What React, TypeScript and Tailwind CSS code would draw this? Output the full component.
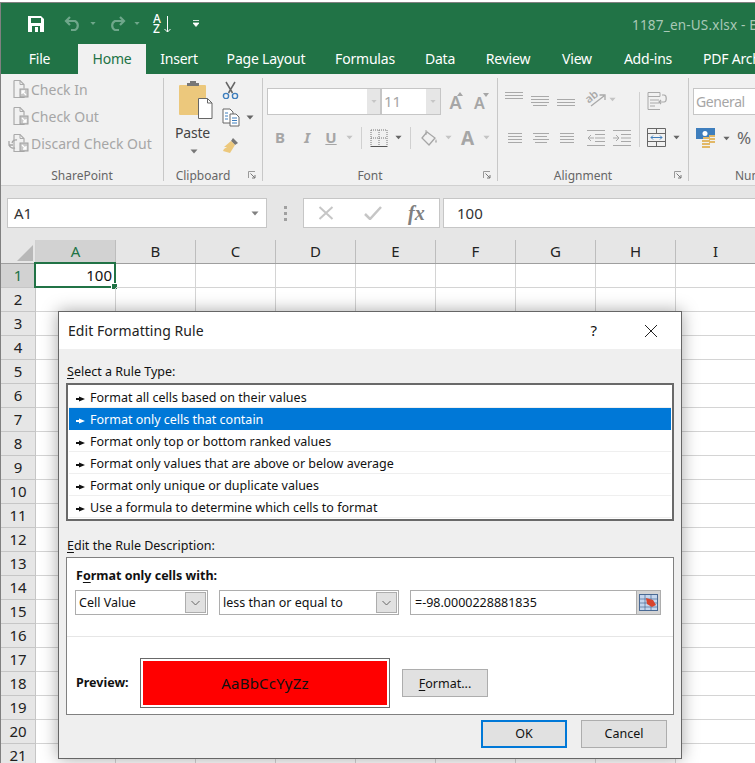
import React from "react";

const font = "font-['Noto_Sans',sans-serif]";

function Caret({ color = "#a6a6a6", className = "" }: { color?: string; className?: string }) {
  return (
    <svg width="8" height="5" viewBox="0 0 8 5" className={className}>
      <path d="M0.5 0.5H7.5L4 4.5Z" fill={color} />
    </svg>
  );
}

function PageBadge({ kind }: { kind: "in" | "out" | "discard" }) {
  return (
    <svg width="22" height="20" viewBox="0 0 22 20">
      {kind === "discard" && <path d="M5 10a4 4 0 0 1 5-3M2 8v4h4M2 12a5 5 0 0 0 6 3" fill="none" stroke="#a8a8a8" strokeWidth="1.3" />}
      <path d="M7 1.5h6l4 4v4M17 15v3.5H7V1.5" fill="none" stroke="#ababab" strokeWidth="1.2" />
      <path d="M13 1.5v4h4" fill="none" stroke="#ababab" />
      <rect x="13" y="10" width="8" height="8" fill="#c8c8c8" stroke="#a0a0a0" />
      <path d={kind === "in" ? "M19 16l-4-4m0 3v-3h3" : "M15 12l4 4m0-3v3h-3"} fill="none" stroke="#fff" strokeWidth="1.3" />
    </svg>
  );
}

function Lines({ w = 18, rows }: { w?: number; rows: [number, number][] }) {
  const h = Math.max(...rows.map(r => r[0])) + 1;
  return (
    <svg width={w} height={h} viewBox={`0 0 ${w} ${h}`}>
      {rows.map(([y, x], i) => (
        <path key={i} d={`M${x} ${y + 0.5}H${w - x}`} stroke="#a9a9a9" strokeWidth="1" />
      ))}
    </svg>
  );
}

function GroupLabel({ text, launcher = false }: { text: string; launcher?: boolean }) {
  return (
    <div className={`relative mt-auto h-[12px] pt-[2px] flex items-center justify-center text-[12px] text-[#666666] ${launcher ? "pr-[20px]" : ""}`}>
      <span className="whitespace-nowrap">{text}</span>
      {launcher && (
        <svg width="8" height="8" viewBox="0 0 8 8" className="absolute right-[6px] top-[2px]">
          <path d="M0.5 7V0.5H7" fill="none" stroke="#9a9a9a" />
          <path d="M2.5 2.5L7 7M4 7h3V4" fill="none" stroke="#777" />
        </svg>
      )}
    </div>
  );
}

function SharePointGroup() {
  const items: [("in" | "out" | "discard"), string][] = [
    ["in", "Check In"],
    ["out", "Check Out"],
    ["discard", "Discard Check Out"],
  ];
  return (
    <div className="w-[163px] shrink-0 flex flex-col border-r border-[#c8c8c8] my-[4px]">
      <div className="flex flex-col pl-[6px] pt-[1px] gap-[7px] h-[82px]">
        {items.map(([k, t]) => (
          <div key={t} className="flex items-center h-[20px] text-[14px] text-[#a6a6a6] gap-[2px]">
            <PageBadge kind={k} />
            <span className="whitespace-nowrap">{t}</span>
          </div>
        ))}
      </div>
      <GroupLabel text="SharePoint" />
    </div>
  );
}

function ClipboardGroup() {
  return (
    <div className="w-[99px] shrink-0 flex flex-col border-r border-[#c8c8c8] my-[4px]">
      <div className="flex h-[82px]">
        <div className="w-[56px] flex flex-col items-center pt-[2px] pl-[1px]">
          <svg width="36" height="40" viewBox="0 0 36 40" className="ml-[7px]">
            <rect x="1" y="5" width="27" height="30" fill="#ecc87c" rx="1" />
            <path d="M9 6V3h3V1h6v2h3v3Z" fill="#777" />
            <path d="M20.5 18.5h9l4.5 4.5v15.5h-13.500Z" fill="#fff" stroke="#666" />
            <path d="M29.500 18.500v4.500h4.500" fill="none" stroke="#666" />
          </svg>
          <span className="text-[14px] tracking-[-0.2px] leading-[18px] text-[#444] mt-[4px]">Paste</span>
          <Caret color="#777" className="mt-[7px] ml-[2px]" />
        </div>
        <div className="flex flex-col pt-[3px] pl-[2px] gap-[9px]">
          <svg width="17" height="18" viewBox="0 0 17 18">
            <path d="M4 1l6.500 11M13 1L6.500 12" stroke="#666" strokeWidth="1.500" fill="none" />
            <circle cx="4" cy="15" r="2.600" fill="none" stroke="#3e7ebd" strokeWidth="1.400" />
            <circle cx="13" cy="15" r="2.600" fill="none" stroke="#3e7ebd" strokeWidth="1.400" />
          </svg>
          <div className="flex items-center gap-[5px]">
            <svg width="19" height="19" viewBox="0 0 19 19">
              <path d="M1 1h7l3 3v11H1Z" fill="#fff" stroke="#666" />
              <path d="M8 6h6l3 3v9H8Z" fill="#fff" stroke="#666" />
              <path d="M10 10h5M10 12.500h5M10 15h5M3 5h3M3 8h3M3 11h3" stroke="#3e7ebd" />
            </svg>
            <Caret color="#666" />
          </div>
          <svg width="18" height="18" viewBox="0 0 18 18" className="mt-[1px]">
            <path d="M11 1l5 5-3 2-4-4Z" fill="#777" />
            <path d="M9 4l4 4-5 8-7-2 1-2 3-2-3 0Z" fill="#ecc87c" />
          </svg>
        </div>
      </div>
      <GroupLabel text="Clipboard" launcher />
    </div>
  );
}

function FontGroup() {
  return (
    <div className="w-[235px] shrink-0 flex flex-col border-r border-[#c8c8c8] my-[4px]">
      <div className="h-[82px] flex flex-col">
        <div className="flex items-center pt-[10px] pl-[4px]">
          <div className="flex h-[27px] w-[114px] border border-[#c6c6c6] bg-white">
            <div className="flex-1" />
            <div className="w-[13px] bg-[#e6e6e6] flex items-center justify-center"><Caret color="#c6c6c6" className="w-[6px]" /></div>
          </div>
          <div className="flex h-[27px] w-[60px] border border-[#c6c6c6] bg-white">
            <span className="flex-1 pl-[2px] text-[15px] leading-[25px] text-[#a6a6a6]">11</span>
            <div className="w-[14px] bg-[#e6e6e6] flex items-center justify-center"><Caret color="#c6c6c6" className="w-[6px]" /></div>
          </div>
          <div className="flex items-end h-[16px] ml-[8px] text-[#a6a6a6] font-semibold">
            <div className="relative w-[13px] text-[18px] leading-[15px] text-center">A<svg width="6" height="4" viewBox="0 0 6 4" className="absolute right-[-1px] top-[-3px]"><path d="M0 4L3 0L6 4Z" fill="#a6a6a6" /></svg></div>
            <div className="relative w-[11px] ml-[12px] text-[16px] leading-[13px] text-center">A<svg width="6" height="4" viewBox="0 0 6 4" className="absolute right-[-4px] top-[-4px]"><path d="M0 0L3 4L6 0Z" fill="#a6a6a6" /></svg></div>
          </div>
        </div>
        <div className="flex items-center pt-[11px] pl-[11px] h-[34px] text-[#a6a6a6]">
          <span className="w-[12px] text-[15px] font-bold text-center">B</span>
          <span className="w-[12px] ml-[15px] text-[15px] font-bold italic text-center">I</span>
          <span className="w-[12px] ml-[12px] text-[15px] font-bold underline text-center">U</span>
          <Caret color="#c4c4c4" className="ml-[9px] w-[7px]" />
          <div className="w-px h-[22px] bg-[#d0d0d0] ml-[8px]" />
          <svg width="18" height="18" viewBox="0 0 18 18" className="ml-[8px]">
            <path d="M1 1h16M1 9h16M1 1v16M9 1v16M17 1v16" stroke="#777" strokeDasharray="1 1" fill="none" />
            <path d="M0.500 17.500h17" stroke="#555" />
          </svg>
          <Caret color="#666" className="ml-[7px] w-[7px]" />
          <div className="w-px h-[22px] bg-[#d0d0d0] ml-[8px]" />
          <svg width="17" height="18" viewBox="0 0 17 18" className="ml-[10px]">
            <path d="M6 3l8 6-6 7-7-7Z" fill="none" stroke="#a6a6a6" strokeWidth="1.300" />
            <path d="M5 1v5" stroke="#a6a6a6" />
            <path d="M15 10c-1 2-1.500 3 0 4c1.500-1 1-2 0-4Z" fill="#b5b5b5" />
          </svg>
          <Caret color="#c4c4c4" className="ml-[7px] w-[7px]" />
          <span className="ml-[8px] w-[15px] text-[19px] leading-[18px] font-bold text-center">A</span>
          <Caret color="#c4c4c4" className="ml-[8px] w-[7px]" />
        </div>
      </div>
      <GroupLabel text="Font" launcher />
    </div>
  );
}

function AlignmentGroup() {
  return (
    <div className="w-[191px] shrink-0 flex flex-col border-r border-[#c8c8c8] my-[4px]">
      <div className="h-[82px] flex pl-[7px] pt-[14px]">
        <div className="w-[134px] flex flex-col">
          <div className="flex items-start h-[20px]">
            <Lines w={18} rows={[[0, 0], [3, 0], [6, 0]]} />
            <div className="ml-[8px] mt-[4px]"><Lines w={18} rows={[[0, 0], [3, 0], [6, 0], [9, 2]]} /></div>
            <div className="ml-[8px] mt-[7px]"><Lines w={18} rows={[[0, 0], [3, 0], [6, 0]]} /></div>
            <svg width="21" height="17" viewBox="0 0 21 17" className="ml-[10px] mt-[-2px]">
              <text x="1" y="12" fontSize="11" fontWeight="600" fill="#a9a9a9" transform="rotate(-40 5 9)">ab</text>
              <path d="M6 16L19 6M14.500 5H20V10" stroke="#a9a9a9" strokeWidth="1.300" fill="none" />
            </svg>
            <Caret color="#c4c4c4" className="ml-[3px] mt-[5px] w-[7px]" />
          </div>
          <div className="flex items-center mt-[18px] h-[16px]">
            <div className="ml-[3px]"><Lines w={14} rows={[[0, 0], [3, 0], [6, 0], [9, 0]]} /></div>
            <div className="ml-[11px]"><Lines w={16} rows={[[0, 0], [3, 2], [6, 0], [9, 2]]} /></div>
            <div className="ml-[11px]"><Lines w={14} rows={[[0, 0], [3, 0], [6, 0], [9, 0]]} /></div>
            <svg width="18" height="16" viewBox="0 0 18 16" className="ml-[13px]">
              <path d="M0 .500h18M8 4.500h10M8 8h10M8 11.500h10M0 15.500h18M7 8H1M4 5L1 8l3 3" stroke="#a9a9a9" fill="none" />
            </svg>
            <svg width="18" height="16" viewBox="0 0 18 16" className="ml-[8px]">
              <path d="M0 .500h18M8 4.500h10M8 8h10M8 11.500h10M0 15.500h18M0 8h6M3 5l3 3-3 3" stroke="#a9a9a9" fill="none" />
            </svg>
          </div>
        </div>
        <div className="w-px h-[55px] bg-[#d0d0d0] ml-0" />
        <div className="flex flex-col ml-[7px]">
          <svg width="20" height="18" viewBox="0 0 20 18">
            <path d="M1 .500h12v4H1ZM1 4.500v13h12M3 8h9M3 11h9M3 14h5" stroke="#a9a9a9" fill="none" />
            <path d="M15 3h2c3 0 3 7 0 7h-5M14 8l-2 2 2 2" stroke="#a9a9a9" fill="none" strokeWidth="1.200" />
          </svg>
          <div className="flex items-center mt-[18px]">
            <svg width="19" height="19" viewBox="0 0 19 19">
              <path d="M.500 .500h18v18H.500ZM.500 5.500h18M.500 13.500h18M9.500 .500v5M9.500 13.500v5" stroke="#666" fill="none" />
              <path d="M4 9.500h11M6 7.500l-2 2 2 2M13 7.500l2 2-2 2" stroke="#3e7ebd" fill="none" />
            </svg>
            <Caret color="#666" className="ml-[7px] w-[7px]" />
          </div>
        </div>
      </div>
      <GroupLabel text="Alignment" launcher />
    </div>
  );
}

function NumberGroup() {
  return (
    <div className="flex-1 min-w-0 flex flex-col my-[4px] overflow-hidden">
      <div className="h-[82px] flex flex-col pl-[4px] pt-[10px]">
        <div className="w-[90px] h-[27px] border border-[#c6c6c6] bg-white pl-[2px] text-[14px] tracking-[-0.4px] leading-[25px] text-[#a6a6a6]">General</div>
        <div className="flex items-center mt-[13px] pl-[3px]">
          <svg width="20" height="20" viewBox="0 0 20 20">
            <rect x="0" y="0" width="19" height="11" fill="#3e7ebd" />
            <circle cx="9" cy="5.500" r="2.500" fill="#fff" />
            <rect x="7" y="9" width="12" height="3" fill="#f1f1f1" />
            <path d="M7 10h7M6 13h8M6 16h8M6 19h8M13 8h6M13 11h6M13 14h6" stroke="#e2b867" strokeWidth="2" />
          </svg>
          <Caret color="#666" className="ml-[7px] w-[7px]" />
          <span className="ml-[7px] text-[17px] leading-[20px] text-[#666]">%</span>
        </div>
      </div>
      <div className="mt-auto h-[12px] pl-[46px] pt-[1px] text-[12px] text-[#666666] leading-[12px] whitespace-nowrap">Number</div>
    </div>
  );
}

function FormulaBar() {
  return (
    <div className="h-[54px] bg-[#e6e6e6] flex items-start pt-[12px] pl-[6px] shrink-0">
      <div className="w-[260px] h-[30px] bg-white border border-[#c6c6c6] flex items-center justify-between pl-[6px] pr-[7px] text-[15px] text-[#333]">
        <span>A1</span>
        <Caret color="#808080" />
      </div>
      <div className="w-[20px] ml-[8px] mr-[8px] h-[30px] flex flex-col items-center justify-center gap-[3px] pl-[1px]">
        <span className="w-[3px] h-[3px] bg-[#a0a0a0]" />
        <span className="w-[3px] h-[3px] bg-[#a0a0a0]" />
        <span className="w-[3px] h-[3px] bg-[#a0a0a0]" />
      </div>
      <div className="w-[137px] h-[30px] bg-white border border-[#c6c6c6] flex items-center pl-[14px]">
        <svg width="16" height="14" viewBox="0 0 16 14"><path d="M1.500 1L14.500 13M14.500 1L1.500 13" stroke="#c6c6c6" strokeWidth="2" /></svg>
        <svg width="18" height="14" viewBox="0 0 18 14" className="ml-[30px]"><path d="M1 8l5 5L17 1" stroke="#c6c6c6" strokeWidth="2.500" fill="none" /></svg>
        <span className="ml-[26px] text-[20px] leading-[20px] font-bold italic text-[#808080] font-['Liberation_Serif',serif]">fx</span>
      </div>
      <div className="flex-1 h-[30px] ml-[3px] bg-white border-y border-l border-[#c6c6c6] pl-[13px] text-[15px] leading-[28px] text-[#333]">100</div>
    </div>
  );
}

function Sheet() {
  const cols = ["A", "B", "C", "D", "E", "F", "G", "H", "I"];
  const rows = Array.from({ length: 21 }, (_, i) => i + 1);
  return (
    <div className="flex-1 overflow-hidden bg-white text-[15px]">
      <div className="flex h-[24px] bg-[#e6e6e6] border-b border-[#9f9f9f]">
        <div className="w-[35px] shrink-0 relative border-r border-[#d0d0d0]">
          <svg width="16" height="16" viewBox="0 0 16 16" className="absolute right-[2px] bottom-[2px]"><path d="M16 0V16H0Z" fill="#b8b8b8" /></svg>
        </div>
        {cols.map(c => (
          <div key={c} className={`w-[80px] shrink-0 flex items-center justify-center border-r border-[#bdbdbd] ${c === "A" ? "bg-[#d2d2d2] text-[#217346]" : "text-[#222]"}`}>{c}</div>
        ))}
      </div>
      {rows.map(r => (
        <div key={r} className="flex h-[24px]">
          <div className={`w-[35px] shrink-0 flex items-center justify-center border-r border-b border-[#c6c6c6] ${r === 1 ? "bg-[#d2d2d2] text-[#217346]" : "bg-[#e6e6e6] text-[#222]"}`}>{r}</div>
          {cols.map(c => (
            <div key={c} className="w-[80px] shrink-0 relative border-r border-b border-[#d4d4d4]">
              {r === 1 && c === "A" && (
                <div className="absolute left-[-2px] top-[-2px] w-[82px] h-[26px] border-2 border-[#217346] flex items-center justify-end pr-[2px] pt-[1px] text-[#111]">
                  100
                  <span className="absolute right-[-4px] bottom-[-4px] w-[7px] h-[7px] bg-[#217346] border border-white" />
                </div>
              )}
            </div>
          ))}
        </div>
      ))}
    </div>
  );
}

function U({ children }: { children: React.ReactNode }) {
  return <span className="underline underline-offset-2">{children}</span>;
}

function ComboArrow() {
  return (
    <div className="w-[21px] h-[21px] bg-[#e1e1e1] border border-[#adadad] flex items-center justify-center">
      <svg width="9" height="6" viewBox="0 0 9 6"><path d="M.5 1l4 4 4-4" fill="none" stroke="#666" /></svg>
    </div>
  );
}

function Dialog() {
  const rules = [
    "Format all cells based on their values",
    "Format only cells that contain",
    "Format only top or bottom ranked values",
    "Format only values that are above or below average",
    "Format only unique or duplicate values",
    "Use a formula to determine which cells to format",
  ];
  return (
    <div className="absolute left-[58px] top-[311px] w-[624px] h-[448px] border border-[#666666] bg-[#efefef] shadow-[0_0_16px_rgba(0,0,0,0.35)] flex flex-col text-[12.5px] text-[#111]">
      <div className="h-[37px] bg-white flex items-center pl-[9px] pr-[23px] text-[14px] tracking-[0.05px] shrink-0">
        <span className="flex-1 text-[#222]">Edit Formatting Rule</span>
        <span className="text-[15px] mr-[47px]">?</span>
        <svg width="14" height="14" viewBox="0 0 14 14"><path d="M1 1l12 12M13 1L1 13" stroke="#222" /></svg>
      </div>
      <div className="flex-1 flex flex-col px-[7px]">
        <div className="h-[16px] mt-[15px] pl-[1px] leading-[16px]"><U>S</U>elect a Rule Type:</div>
        <div className="mt-[3px] h-[138px] w-[608px] border-2 border-[#696969] bg-white px-[1px] pt-[1px]">
          {rules.map((r, i) => (
            <div key={r} className={`h-[22px] flex items-center pl-[7px] pt-[4px] gap-[5px] border-b ${i === 1 ? "bg-[#0078d7] text-white border-[#0078d7]" : "border-[#efefef]"}`}>
              <svg width="9" height="6" viewBox="0 0 9 6"><path d="M0 2h3V.5L9 3 3 5.500V4H0Z" fill={i === 1 ? "#fff" : "#111"} /></svg>
              <span className="whitespace-nowrap">{r}</span>
            </div>
          ))}
        </div>
        <div className="h-[16px] mt-[17px] pl-[1px] leading-[16px]"><U>E</U>dit the Rule Description:</div>
        <div className="mt-[3px] h-[158px] w-[608px] border border-[#808080] bg-white flex flex-col">
          <div className="h-[79px] border-b border-[#e6e6e6] px-[8px]">
            <div className="h-[16px] mt-[10px] pl-[1px] font-bold leading-[16px]">F<U>o</U>rmat only cells with:</div>
            <div className="flex mt-[6px]">
              <div className="w-[133px] h-[25px] border border-[#adadad] flex items-center justify-between pl-[3px] pr-[1px]"><span className="pt-[2px]">Cell Value</span><ComboArrow /></div>
              <div className="w-[180px] h-[25px] ml-[11px] border border-[#adadad] flex items-center justify-between pl-[3px] pr-[1px] whitespace-nowrap"><span className="pt-[2px]">less than or equal to</span><ComboArrow /></div>
              <div className="w-[251px] h-[25px] ml-[11px] border border-[#adadad] flex items-center justify-between pl-[4px] whitespace-nowrap">
                <span className="pt-[2px]">=-98.0000228881835</span>
                <div className="w-[25px] h-[25px] -mr-px bg-[#d4d4d4] border border-[#adadad] flex items-center justify-center">
                  <svg width="19" height="17" viewBox="0 0 19 17">
                    <rect x="0.500" y="0.500" width="18" height="16" fill="#c4d6ee" stroke="#4a6a94" />
                    <path d="M.5 5h18M.5 9h18M.5 13h18M6 .5v16M12 .5v16" stroke="#4a6a94" strokeWidth="0.700" />
                    <path d="M7 4l7 2 3 5-4 2-5-3Z" fill="#d8432c" />
                  </svg>
                </div>
              </div>
            </div>
          </div>
          <div className="flex items-center flex-1 pl-[9px] pt-[14px]">
            <span className="w-[64px] font-bold pt-[2px]">Preview:</span>
            <div className="w-[250px] h-[50px] border border-[#696969] p-[2px] bg-white">
              <div className="w-full h-full bg-[#ff0000] flex items-center justify-center pt-[2px] text-[15px] tracking-[0.2px] text-[#111]">AaBbCcYyZz</div>
            </div>
            <button className="ml-[12px] w-[86px] h-[28px] pt-[3px] bg-[#e1e1e1] border border-[#adadad] text-[12.5px]"><U>F</U>ormat...</button>
          </div>
        </div>
        <div className="flex justify-end mt-[5px] pr-[7px]">
          <button className="w-[86px] h-[28px] pt-[1px] bg-[#e1e1e1] border-2 border-[#0078d7] text-[12.5px] mr-[14px]">OK</button>
          <button className="w-[86px] h-[28px] pt-[1px] bg-[#e1e1e1] border border-[#adadad] text-[12.5px]">Cancel</button>
        </div>
      </div>
    </div>
  );
}

function TitleBar() {
  return (
    <div className="h-[41px] flex items-center relative">
      <svg width="16" height="16" viewBox="0 0 16 16" className="ml-[27px]">
        <path d="M0 0h13l3 3v13H0Z" fill="#fff" />
        <rect x="3" y="2" width="10" height="5" fill="#217346" />
        <rect x="4" y="10" width="8" height="6" fill="#217346" />
        <rect x="7" y="11" width="3" height="5" fill="#fff" />
      </svg>
      <svg width="18" height="15" viewBox="0 0 18 15" className="ml-[20px]">
        <path d="M2 5h9a5 5 0 0 1 0 9H7M6 1L2 5l4 4" fill="none" stroke="#6fa78b" strokeWidth="2.200" />
      </svg>
      <Caret color="#6fa78b" className="ml-[8px] w-[6px]" />
      <svg width="18" height="15" viewBox="0 0 18 15" className="ml-[12px]">
        <path d="M16 5H7a5 5 0 0 0 0 9h4M12 1l4 4-4 4" fill="none" stroke="#6fa78b" strokeWidth="2.200" />
      </svg>
      <Caret color="#6fa78b" className="ml-[8px] w-[6px]" />
      <div className="ml-[13px] relative w-[18px] h-[20px] text-white text-[12px] leading-[10px] font-medium">
        <div>A</div>
        <div>Z</div>
        <svg width="7" height="18" viewBox="0 0 7 18" className="absolute right-0 top-[1px]"><path d="M3.500 1v16M.5 14l3 3 3-3" fill="none" stroke="#fff" /></svg>
      </div>
      <svg width="6" height="7" viewBox="0 0 6 7" className="ml-[22px]">
        <path d="M0 .5h6M0 3h6L3 6.500 0 3" fill="#fff" stroke="#fff" strokeWidth="0.800" />
      </svg>
      <span className="ml-auto pt-[3px] whitespace-nowrap text-[13.5px] text-[#a9c9b7] tracking-[0.2px] translate-x-[2px]">1187_en-US.xlsx - E</span>
    </div>
  );
}

function Tabs() {
  const tabs: [string, number][] = [
    ["File", 77],
    ["Home", 68],
    ["Insert", 66],
    ["Page Layout", 108],
    ["Formulas", 90],
    ["Data", 60],
    ["Review", 76],
    ["View", 62],
    ["Add-ins", 80],
  ];
  return (
    <div className="h-[30px] flex text-[14px] tracking-[-0.2px] text-white overflow-hidden">
      {tabs.map(([t, w]) => (
        <div key={t} style={{ width: w }} className={`shrink-0 flex items-center justify-center pb-[2px] whitespace-nowrap ${t === "Home" ? "bg-[#f1f1f1] text-[#217346]" : ""}`}>{t}</div>
      ))}
      <div className="pl-[15px] pb-[2px] flex items-center whitespace-nowrap">PDF Architect</div>
    </div>
  );
}

export default function App() {
  return (
    <div className={`relative w-[755px] h-[763px] overflow-hidden bg-white ${font}`}>
      <div className="h-[2px] bg-white" />
      <div className="h-[761px] border-l border-t border-[#808080] flex flex-col overflow-hidden">
        <div className="bg-[#217346] shrink-0">
          <TitleBar />
          <Tabs />
        </div>
        <div className="h-[112px] bg-[#f1f1f1] border-b border-[#d0d0d0] flex shrink-0">
          <SharePointGroup />
          <ClipboardGroup />
          <FontGroup />
          <AlignmentGroup />
          <NumberGroup />
        </div>
        <FormulaBar />
        <Sheet />
      </div>
      <Dialog />
    </div>
  );
}
